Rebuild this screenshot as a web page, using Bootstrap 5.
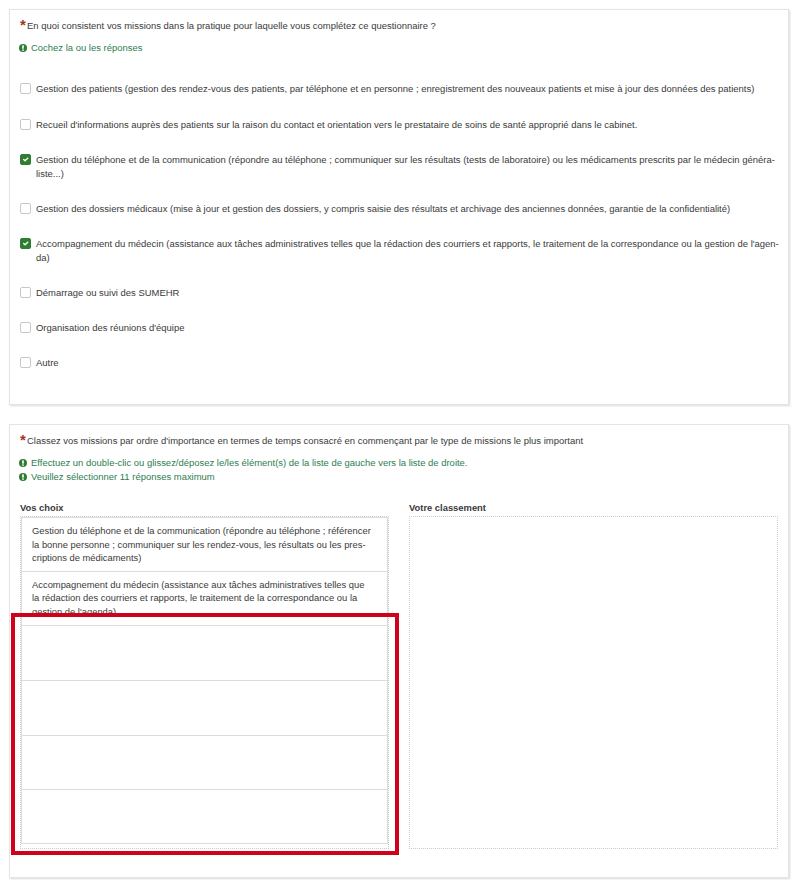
<!DOCTYPE html>
<html lang="fr">
<head>
<meta charset="utf-8">
<title>Questionnaire</title>
<link href="https://cdn.jsdelivr.net/npm/bootstrap@5.3.0/dist/css/bootstrap.min.css" rel="stylesheet">
<style>
html,body{background:#fff}
body{font-family:"Liberation Sans",Arial,sans-serif;font-size:9.46px;line-height:14px;color:#3a3a3a;margin:0;width:798px;height:888px;overflow:hidden;position:relative}
.sheet{padding:9px 9px 0 9px}
.qcard{border:1px solid #e4e4e4;border-radius:0;box-shadow:1px 1px 2px rgba(0,0,0,.15);padding:0 10px;background:#fff}
.qa{height:396px}
.qb{height:454px;margin-top:19px}
.qtitle{display:flex;align-items:flex-start;padding-top:8px;height:30px}
.star{color:#a5321f;font-size:15px;line-height:14px;width:7px;flex:none;font-weight:700}
.qtitle span.txt{padding-top:1px}
.hint{color:#2e7d4f;display:flex;align-items:center;gap:4px;margin-left:-1px}
.hint svg{flex:none}
.hints-a{margin-top:1px;margin-bottom:27px}
.hints-b{margin-top:1px}
.hints-b .hint{height:14px}
.opt{display:flex;gap:5px;margin-bottom:21px;padding:0}
.opt.lead-opt{margin-bottom:22px}
.opt .form-check-input{width:11px;height:11px;margin:1px 0 0 0;flex:none;border:1px solid #c8c8c8;border-radius:2px;--bs-form-check-bg:#fff}
.opt .form-check-input:checked{background-color:#2e7d32;border-color:#2e7d32}
.opt label{margin:0;white-space:nowrap}
.cols{display:flex;gap:20px;margin-top:17px}
.colx{width:369px;flex:none}
.coly{flex:1}
.coltitle{font-weight:700;height:15px;line-height:14px;font-size:9.4px}
.pane{border:1px dotted #ccc;height:333px;display:block}
.pick{border:1px solid #dcdcdc;border-bottom:0;height:54.7px;padding:6px 15px 0 10px;margin:0;width:367px;line-height:13.5px;font-size:9.4px;border-radius:0;background:#fff}
.pick:first-child{height:53.5px}
.pick:last-child{height:55px;border-bottom:1px solid #dcdcdc}
.annot{position:absolute;left:11px;top:613px;width:388px;height:242px;border:4px solid #d0021b;pointer-events:none}
</style>
</head>
<body>
<div class="sheet">
  <div class="card qcard qa">
    <div class="qtitle"><span class="star">*</span><span class="txt">En quoi consistent vos missions dans la pratique pour laquelle vous complétez ce questionnaire ?</span></div>
    <div class="hint hints-a">
      <svg width="8" height="8" viewBox="0 0 8 8"><circle cx="4" cy="4" r="4" fill="#2e7d32"/><rect x="3.2" y="1.3" width="1.6" height="3.4" fill="#fff"/><rect x="3.2" y="5.4" width="1.6" height="1.4" fill="#fff"/></svg>
      <span>Cochez la ou les réponses</span>
    </div>
    <div class="opt lead-opt"><input class="form-check-input" type="checkbox" id="o1"><label for="o1">Gestion des patients (gestion des rendez-vous des patients, par téléphone et en personne ; enregistrement des nouveaux patients et mise à jour des données des patients)</label></div>
    <div class="opt"><input class="form-check-input" type="checkbox" id="o2"><label for="o2">Recueil d'informations auprès des patients sur la raison du contact et orientation vers le prestataire de soins de santé approprié dans le cabinet.</label></div>
    <div class="opt"><input class="form-check-input" type="checkbox" id="o3" checked><label for="o3">Gestion du téléphone et de la communication (répondre au téléphone ; communiquer sur les résultats (tests de laboratoire) ou les médicaments prescrits par le médecin généra-<br>liste...)</label></div>
    <div class="opt"><input class="form-check-input" type="checkbox" id="o4"><label for="o4">Gestion des dossiers médicaux (mise à jour et gestion des dossiers, y compris saisie des résultats et archivage des anciennes données, garantie de la confidentialité)</label></div>
    <div class="opt"><input class="form-check-input" type="checkbox" id="o5" checked><label for="o5">Accompagnement du médecin (assistance aux tâches administratives telles que la rédaction des courriers et rapports, le traitement de la correspondance ou la gestion de l'agen-<br>da)</label></div>
    <div class="opt"><input class="form-check-input" type="checkbox" id="o6"><label for="o6">Démarrage ou suivi des SUMEHR</label></div>
    <div class="opt"><input class="form-check-input" type="checkbox" id="o7"><label for="o7">Organisation des réunions d'équipe</label></div>
    <div class="opt"><input class="form-check-input" type="checkbox" id="o8"><label for="o8">Autre</label></div>
  </div>
  <div class="card qcard qb">
    <div class="qtitle"><span class="star">*</span><span class="txt">Classez vos missions par ordre d'importance en termes de temps consacré en commençant par le type de missions le plus important</span></div>
    <div class="hints-b">
      <div class="hint"><svg width="8" height="8" viewBox="0 0 8 8"><circle cx="4" cy="4" r="4" fill="#2e7d32"/><rect x="3.2" y="1.3" width="1.6" height="3.4" fill="#fff"/><rect x="3.2" y="5.4" width="1.6" height="1.4" fill="#fff"/></svg><span>Effectuez un double-clic ou glissez/déposez le/les élément(s) de la liste de gauche vers la liste de droite.</span></div>
      <div class="hint"><svg width="8" height="8" viewBox="0 0 8 8"><circle cx="4" cy="4" r="4" fill="#2e7d32"/><rect x="3.2" y="1.3" width="1.6" height="3.4" fill="#fff"/><rect x="3.2" y="5.4" width="1.6" height="1.4" fill="#fff"/></svg><span>Veuillez sélectionner 11 réponses maximum</span></div>
    </div>
    <div class="cols">
      <div class="colx">
        <div class="coltitle">Vos choix</div>
        <div class="pane">
          <div class="pick">Gestion du téléphone et de la communication (répondre au téléphone ; référencer la bonne personne ; communiquer sur les rendez-vous, les résultats ou les pres-<br>criptions de médicaments)</div>
          <div class="pick">Accompagnement du médecin (assistance aux tâches administratives telles que la rédaction des courriers et rapports, le traitement de la correspondance ou la gestion de l'agenda)</div>
          <div class="pick"></div>
          <div class="pick"></div>
          <div class="pick"></div>
          <div class="pick"></div>
        </div>
      </div>
      <div class="coly">
        <div class="coltitle">Votre classement</div>
        <div class="pane"></div>
      </div>
    </div>
  </div>
</div>
<div class="annot"></div>
<script src="https://cdn.jsdelivr.net/npm/bootstrap@5.3.0/dist/js/bootstrap.bundle.min.js"></script>
</body>
</html>
